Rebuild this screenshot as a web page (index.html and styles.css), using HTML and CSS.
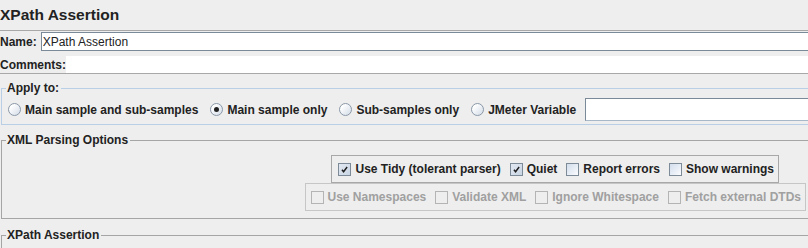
FILE: index.html
```html
<!DOCTYPE html>
<html lang="en">
  <head>
    <meta charset="UTF-8" />
    <title>XPath Assertion</title>
    <link rel="stylesheet" href="styles.css">
  </head>
  <body>
    <div class="page">
      <h1 class="title">XPath Assertion</h1>

      <div class="name-panel">
        <div class="name-row">
          <label for="name">Name:</label>
          <input type="text" id="name" class="name-field" value="XPath Assertion" />
        </div>
        <div class="comments-row">
          <label>Comments:</label>
          <div class="comments-area"></div>
        </div>
      </div>

      <fieldset class="group apply">
        <legend>Apply to:</legend>
        <div class="radio-row">
          <label class="radio"><span class="radio-mark"></span>Main sample and sub-samples</label>
          <label class="radio"><span class="radio-mark on"></span>Main sample only</label>
          <label class="radio"><span class="radio-mark"></span>Sub-samples only</label>
          <label class="radio"><span class="radio-mark"></span>JMeter Variable</label>
          <input type="text" class="var-field" />
        </div>
      </fieldset>

      <fieldset class="group parse">
        <legend>XML Parsing Options</legend>
        <div class="parse-body">
          <div class="opt-stack">
            <div class="opt-box">
              <label class="check"><span class="check-mark on"><svg viewBox="0 0 13 13"><path d="M3.5 6.8 L5.4 9.2 L9.6 3.6" /></svg></span>Use Tidy (tolerant parser)</label>
              <label class="check"><span class="check-mark on"><svg viewBox="0 0 13 13"><path d="M3.5 6.8 L5.4 9.2 L9.6 3.6" /></svg></span>Quiet</label>
              <label class="check"><span class="check-mark"></span>Report errors</label>
              <label class="check"><span class="check-mark"></span>Show warnings</label>
            </div>
            <div class="opt-box disabled">
              <label class="check"><span class="check-mark"></span>Use Namespaces</label>
              <label class="check"><span class="check-mark"></span>Validate XML</label>
              <label class="check"><span class="check-mark"></span>Ignore Whitespace</label>
              <label class="check"><span class="check-mark"></span>Fetch external DTDs</label>
            </div>
          </div>
        </div>
      </fieldset>

      <fieldset class="group xpath">
        <legend>XPath Assertion</legend>
      </fieldset>
    </div>
  </body>
</html>
```

FILE: styles.css
```css
* {
  margin: 0;
  padding: 0;
  box-sizing: border-box;
}
body {
  background-color: #eeeeee;
  color: #222222;
  font-family: "Liberation Sans", Arial, sans-serif;
  font-size: 12px;
  font-weight: bold;
  overflow: hidden;
}
.page {
  width: 812px;
}
.title {
  font-size: 15.5px;
  line-height: 20px;
  padding-top: 5px;
  margin-bottom: 5px;
}
.name-panel {
  border-top: 1px solid #a8a8a8;
  padding-top: 1px;
}
.name-row {
  display: flex;
  align-items: center;
  height: 19px;
}
.name-row label {
  margin-right: 4px;
}
.name-field {
  flex: 1;
  height: 19px;
  border: 1px solid #7a8a99;
  border-right: none;
  padding: 0 1px;
  background-color: #ffffff;
  color: #222222;
  font-family: "Liberation Sans", Arial, sans-serif;
  font-size: 12px;
  font-weight: normal;
  outline: none;
}
.comments-row {
  display: flex;
  align-items: center;
  height: 18px;
  margin-top: 5px;
  border-bottom: 1px solid #a8a8a8;
}
.comments-area {
  flex: 1;
  height: 100%;
  background-color: #ffffff;
}
.group {
  margin-left: 1px;
  padding: 0 5px 0 4px;
  min-width: 0;
}
.group legend {
  padding: 0 2px 0 1px;
  line-height: 14px;
}
.apply {
  margin-top: 7px;
  border: 1px solid #b8cfe5;
}
.parse {
  margin-top: 8px;
  border: 1px solid #a5a5a5;
}
.xpath {
  margin-top: 9px;
  border: 1px solid #a5a5a5;
  height: 40px;
}
.radio-row {
  display: flex;
  align-items: center;
  height: 23px;
  margin: 3px 0 3px 2px;
}
.radio {
  display: flex;
  align-items: center;
  margin-right: 12px;
}
.radio:nth-child(4) {
  margin-right: 9px;
}
.radio-mark {
  width: 13px;
  height: 13px;
  margin-right: 4px;
  border: 1px solid #8a98a8;
  border-radius: 50%;
  background: linear-gradient(135deg, #ffffff 20%, #d3dce8);
  position: relative;
}
.radio-mark.on::after {
  content: "";
  position: absolute;
  left: 3px;
  top: 3px;
  width: 5px;
  height: 5px;
  border-radius: 50%;
  background-color: #222222;
}
.var-field {
  flex: 1;
  height: 23px;
  margin-right: -6px;
  border: 1px solid #7a8a99;
  border-bottom-color: #a9b8c8;
  border-right: none;
  background-color: #ffffff;
  outline: none;
}
.parse-body {
  display: flex;
  justify-content: flex-end;
  padding: 8px 0 7px;
}
.opt-stack {
  display: flex;
  flex-direction: column;
  align-items: center;
}
.opt-box {
  display: flex;
  align-items: center;
  height: 28px;
  padding: 0 4px 0 6px;
  border: 1px solid #a8a8a8;
}
.opt-box.disabled {
  padding-left: 5px;
  border-color: #c6c6c6;
  color: #a0a0a0;
}
.check {
  display: flex;
  align-items: center;
  margin-right: 9px;
}
.check:last-child {
  margin-right: 0;
}
.check-mark {
  width: 13px;
  height: 13px;
  margin-right: 4px;
  border: 1px solid #7d8b99;
  background: linear-gradient(135deg, #d2ddec, #fbfcfe);
}
.check-mark svg {
  display: block;
  width: 11px;
  height: 11px;
}
.check-mark svg path {
  fill: none;
  stroke: #1e1e1e;
  stroke-width: 1.7;
}
.check-mark.on {
  background: linear-gradient(135deg, #e2e8f1, #c9d5e4);
}
.disabled .check-mark {
  border-color: #b4b4b4;
  background: none;
}
```
